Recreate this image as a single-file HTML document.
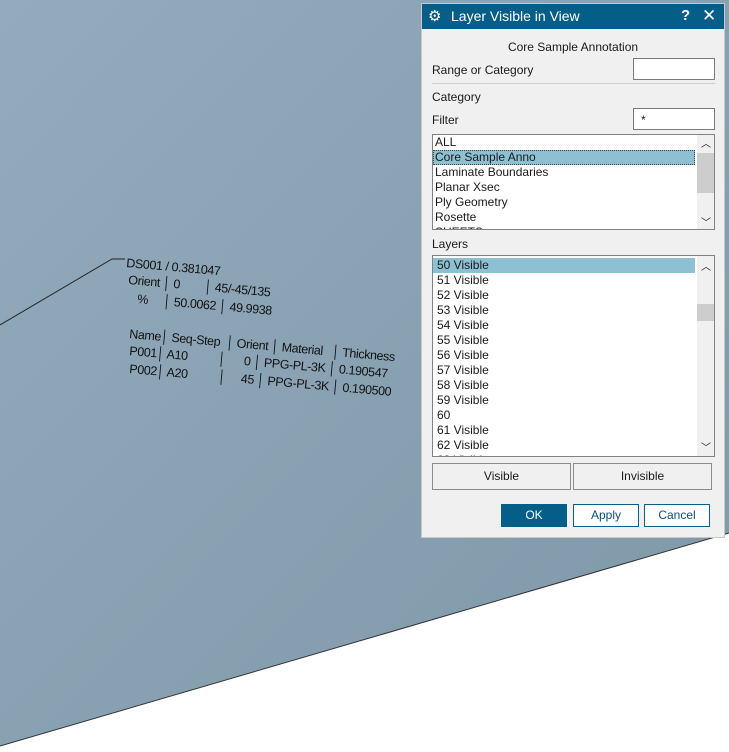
<!DOCTYPE html>
<html><head><meta charset="utf-8"><style>
*{box-sizing:border-box}
body{margin:0;width:729px;height:752px;overflow:hidden;position:relative;background:#fff;font-family:"Liberation Sans",sans-serif}
.bg{position:absolute;inset:0}
.t{position:absolute;font-size:12.5px;letter-spacing:-0.4px;color:#111;white-space:nowrap;transform-origin:0 0}
.dlg{position:absolute;left:421px;top:3px;width:304px;height:535px;background:#f0f0f0;border:1px solid #c8c8c8;font-size:12px;color:#1a1a1a}
.tb{position:absolute;left:0;top:0;width:302px;height:25px;background:#045e88;color:#fff;font-size:14px}
.a{position:absolute;white-space:nowrap}
.box{position:absolute;background:#fff;border:1px solid #7a7a7a}
.lst{position:absolute;background:#fff;border:1px solid #828282;overflow:hidden}
.row{height:15px;line-height:15px;padding-left:2px}
.sel{background:#8cc0d2}
.sb{position:absolute;right:0;top:0;width:17px;height:100%;background:#f0f0f0}
.btn{position:absolute;border:1px solid #8a8a8a;background:#f0f0f0;text-align:center;line-height:24px}
.b2{position:absolute;border:1px solid #0a5f8a;background:#fff;text-align:center;line-height:21px;color:#0a4f7a}
</style></head><body>
<svg class="bg" width="729" height="752">
<defs><linearGradient id="g" x1="0" y1="0" x2="1" y2="1"><stop offset="0" stop-color="#93abbd"/><stop offset="1" stop-color="#7f98a8"/></linearGradient></defs>
<polygon points="0,0 729,0 729,533 0,746" fill="url(#g)"/>
<line x1="0" y1="746" x2="729" y2="533" stroke="#333" stroke-width="1"/>
<polyline points="0,325 112,259 125,259" fill="none" stroke="#222" stroke-width="1"/>
</svg>
<div class="t" style="left:127px;top:256px;transform:rotate(5deg)">DS001 / 0.381047</div>
<div class="t" style="left:129px;top:273px;transform:rotate(5deg)">Orient │ 0 &nbsp;&nbsp;&nbsp;&nbsp;&nbsp;&nbsp;&nbsp;│ 45/-45/135</div>
<div class="t" style="left:138px;top:292px;transform:rotate(5deg)">% &nbsp;&nbsp;&nbsp;&nbsp;│ 50.0062 │ 49.9938</div>
<div class="t" style="left:130px;top:327px;transform:rotate(5deg)">Name│ Seq-Step &nbsp;│ Orient │ Material &nbsp;&nbsp;│ Thickness</div>
<div class="t" style="left:130px;top:344px;transform:rotate(5deg)">P001│ A10 &nbsp;&nbsp;&nbsp;&nbsp;&nbsp;&nbsp;&nbsp;&nbsp;&nbsp;│ &nbsp;&nbsp;&nbsp;&nbsp;&nbsp;0 │ PPG-PL-3K │ 0.190547</div>
<div class="t" style="left:130px;top:362px;transform:rotate(5deg)">P002│ A20 &nbsp;&nbsp;&nbsp;&nbsp;&nbsp;&nbsp;&nbsp;&nbsp;&nbsp;│ &nbsp;&nbsp;&nbsp;&nbsp;45 │ PPG-PL-3K │ 0.190500</div>
<div class="dlg">
<div class="tb"><span class="a" style="left:6px;top:3px;font-size:15px">⚙</span><span class="a" style="left:29px;top:4px">Layer Visible in View</span><span class="a" style="left:259px;top:3px;font-weight:bold;font-size:15px">?</span><span class="a" style="left:280px;top:2px;font-size:17px">✕</span></div>
<div class="a" style="left:0;width:302px;text-align:center;top:36px">Core Sample Annotation</div>
<div class="a" style="left:10px;top:59px">Range or Category</div>
<div class="box" style="left:211px;top:54px;width:82px;height:22px"></div>
<div style="position:absolute;left:10px;top:79px;width:283px;height:1px;background:#d0d0d0"></div>
<div class="a" style="left:10px;top:86px">Category</div>
<div class="a" style="left:10px;top:109px">Filter</div>
<div class="box" style="left:211px;top:104px;width:82px;height:22px;padding:4px 7px">*</div>
<div class="lst" style="left:10px;top:130px;width:283px;height:96px">
<div class="row">ALL</div><div class="row sel" style="width:262px;outline:1px dotted #444;outline-offset:-1px">Core Sample Anno</div><div class="row">Laminate Boundaries</div><div class="row">Planar Xsec</div><div class="row">Ply Geometry</div><div class="row">Rosette</div><div class="row">SHEETS</div>
<div class="sb"><div style="position:absolute;top:18px;left:0;width:17px;height:40px;background:#cdcdcd"></div><span class="a" style="top:0;left:4px;font-size:10px">︿</span><span class="a" style="bottom:0;left:4px;font-size:10px">﹀</span></div></div>
<div class="a" style="left:10px;top:233px">Layers</div>
<div class="lst" style="left:10px;top:251px;width:283px;height:202px;padding-top:2px">
<div class="row sel" style="width:262px;padding-left:4px">50 Visible</div>
<div class="row" style="padding-left:4px">51 Visible</div><div class="row" style="padding-left:4px">52 Visible</div><div class="row" style="padding-left:4px">53 Visible</div><div class="row" style="padding-left:4px">54 Visible</div><div class="row" style="padding-left:4px">55 Visible</div><div class="row" style="padding-left:4px">56 Visible</div><div class="row" style="padding-left:4px">57 Visible</div><div class="row" style="padding-left:4px">58 Visible</div><div class="row" style="padding-left:4px">59 Visible</div><div class="row" style="padding-left:4px">60</div><div class="row" style="padding-left:4px">61 Visible</div><div class="row" style="padding-left:4px">62 Visible</div><div class="row" style="padding-left:4px">63 Visible</div>
<div class="sb"><div style="position:absolute;top:48px;left:0;width:17px;height:17px;background:#cdcdcd"></div><span class="a" style="top:2px;left:4px;font-size:10px">︿</span><span class="a" style="bottom:2px;left:4px;font-size:10px">﹀</span></div></div>
<div class="btn" style="left:10px;top:459px;width:139px;height:27px">Visible</div>
<div class="btn" style="left:151px;top:459px;width:139px;height:27px">Invisible</div>
<div class="b2" style="left:79px;top:500px;width:66px;height:23px;background:#045e88;color:#fff;border-color:#045e88">OK</div>
<div class="b2" style="left:151px;top:500px;width:66px;height:23px">Apply</div>
<div class="b2" style="left:222px;top:500px;width:66px;height:23px">Cancel</div>
</div>
</body></html>
